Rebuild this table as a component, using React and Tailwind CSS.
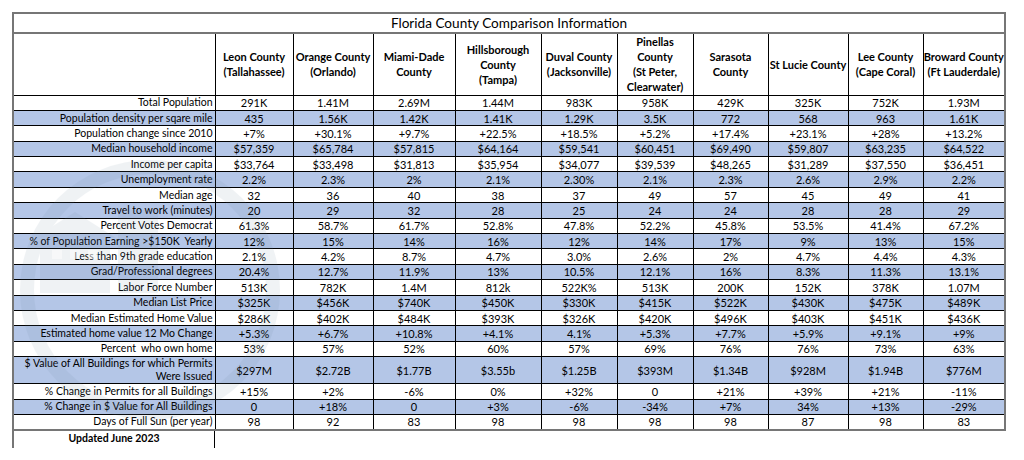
import React from "react";

const cols = [
  ["Leon County", "(Tallahassee)"],
  ["Orange County", "(Orlando)"],
  ["Miami-Dade", "County"],
  ["Hillsborough", "County", "(Tampa)"],
  ["Duval County", "(Jacksonville)"],
  ["Pinellas", "County", "(St Peter,", "Clearwater)"],
  ["Sarasota", "County"],
  ["St Lucie County"],
  ["Lee County", "(Cape Coral)"],
  ["Broward County", "(Ft Lauderdale)"],
];

const widths = [202, 78, 80, 82, 86, 76, 76, 75, 80, 75, 82];

const rows = [
  ["Total Population", ["291K", "1.41M", "2.69M", "1.44M", "983K", "958K", "429K", "325K", "752K", "1.93M"]],
  ["Population density per sqare mile", ["435", "1.56K", "1.42K", "1.41K", "1.29K", "3.5K", "772", "568", "963", "1.61K"]],
  ["Population change since 2010", ["+7%", "+30.1%", "+9.7%", "+22.5%", "+18.5%", "+5.2%", "+17.4%", "+23.1%", "+28%", "+13.2%"]],
  ["Median household income", ["$57,359", "$65,784", "$57,815", "$64,164", "$59,541", "$60,451", "$69,490", "$59,807", "$63,235", "$64,522"]],
  ["Income per capita", ["$33,764", "$33,498", "$31,813", "$35,954", "$34,077", "$39,539", "$48,265", "$31,289", "$37,550", "$36,451"]],
  ["Unemployment rate", ["2.2%", "2.3%", "2%", "2.1%", "2.30%", "2.1%", "2.3%", "2.6%", "2.9%", "2.2%"]],
  ["Median age", ["32", "36", "40", "38", "37", "49", "57", "45", "49", "41"]],
  ["Travel to work (minutes)", ["20", "29", "32", "28", "25", "24", "24", "28", "28", "29"]],
  ["Percent Votes Democrat", ["61.3%", "58.7%", "61.7%", "52.8%", "47.8%", "52.2%", "45.8%", "53.5%", "41.4%", "67.2%"]],
  ["% of Population Earning >$150K  Yearly", ["12%", "15%", "14%", "16%", "12%", "14%", "17%", "9%", "13%", "15%"]],
  ["Less than 9th grade education", ["2.1%", "4.2%", "8.7%", "4.7%", "3.0%", "2.6%", "2%", "4.7%", "4.4%", "4.3%"]],
  ["Grad/Professional degrees", ["20.4%", "12.7%", "11.9%", "13%", "10.5%", "12.1%", "16%", "8.3%", "11.3%", "13.1%"]],
  ["Labor Force Number", ["513K", "782K", "1.4M", "812k", "522K%", "513K", "200K", "152K", "378K", "1.07M"]],
  ["Median List Price", ["$325K", "$456K", "$740K", "$450K", "$330K", "$415K", "$522K", "$430K", "$475K", "$489K"]],
  ["Median Estimated Home Value", ["$286K", "$402K", "$484K", "$393K", "$326K", "$420K", "$496K", "$403K", "$451K", "$436K"]],
  ["Estimated home value 12 Mo Change", ["+5.3%", "+6.7%", "+10.8%", "+4.1%", "4.1%", "+5.3%", "+7.7%", "+5.9%", "+9.1%", "+9%"]],
  ["Percent  who own home", ["53%", "57%", "52%", "60%", "57%", "69%", "76%", "76%", "73%", "63%"]],
  [["$ Value of All Buildings for which Permits", "Were Issued"], ["$297M", "$2.72B", "$1.77B", "$3.55b", "$1.25B", "$393M", "$1.34B", "$928M", "$1.94B", "$776M"]],
  ["% Change in Permits for all Buildings", ["+15%", "+2%", "-6%", "0%", "+32%", "0", "+21%", "+39%", "+21%", "-11%"]],
  ["% Change in $ Value for All Buildings", ["0", "+18%", "0", "+3%", "-6%", "-34%", "+7%", "34%", "+13%", "-29%"]],
  ["Days of Full Sun (per year)", ["98", "92", "83", "98", "98", "98", "98", "87", "98", "83"]],
];

function Watermark() {
  return (
    <svg
      className="pointer-events-none absolute left-0 top-[150px]"
      width="300"
      height="290"
      viewBox="0 0 300 290"
    >
      <g opacity="0.1" fill="#6f8aa0">
        <path d="M150 10 A130 130 0 1 0 150 270 A130 130 0 1 0 150 10 Z M150 24 A116 116 0 1 1 150 256 A116 116 0 1 1 150 24 Z" fillRule="evenodd" />
        <rect x="40" y="85" width="70" height="58" />
        <polygon points="34,88 75,62 116,88" />
        <rect x="118" y="60" width="40" height="83" />
      </g>
      <g fill="#ffffff" opacity="0.5">
        <rect x="52" y="100" width="10" height="9" />
        <rect x="70" y="100" width="10" height="9" />
        <rect x="88" y="100" width="10" height="9" />
      </g>
    </svg>
  );
}

export default function App() {
  return (
    <div
      className="relative h-[460px] w-[1024px] overflow-hidden bg-white pl-[12px] pt-[12px] text-black"
      style={{ fontFamily: "Lato, 'Liberation Sans', sans-serif" }}
    >
      <table className="table-fixed border-collapse border-2 border-[#767676]" style={{ width: 993 }}>
        <colgroup>
          {widths.map((w, i) => (
            <col key={i} style={{ width: w }} />
          ))}
        </colgroup>
        <thead>
          <tr className="h-[20px]">
            <th
              colSpan={11}
              className="border-b-2 border-[#767676] p-0 text-center text-[13.6px] font-normal leading-[18px]"
            >
              Florida County Comparison Information
            </th>
          </tr>
          <tr className="h-[62px]">
            <th className="border border-black p-0"></th>
            {cols.map((c, i) => (
              <th
                key={i}
                className="border border-black p-0 text-center text-[11px] font-bold leading-[15px]"
              >
                {c.map((l, j) => (
                  <div key={j}>{l}</div>
                ))}
              </th>
            ))}
          </tr>
        </thead>
        <tbody>
          {rows.map(([label, vals], i) => {
            const two = Array.isArray(label);
            return (
              <tr
                key={i}
                className={`${i % 2 === 1 ? "bg-[#b4c6e7]" : "bg-white"} ${two ? "h-[27px]" : "h-[15.4px]"}`}
              >
                <td className="whitespace-pre border border-black py-0 pl-0 pr-[2px] text-right text-[10.5px] leading-[13px]">
                  {two ? (
                    <>
                      <div>{label[0]}</div>
                      <div>{label[1]}</div>
                    </>
                  ) : (
                    label
                  )}
                </td>
                {vals.map((v, j) => (
                  <td
                    key={j}
                    className="border border-black p-0 text-center text-[11px] leading-[13px]"
                  >
                    {v}
                  </td>
                ))}
              </tr>
            );
          })}
        </tbody>
      </table>
      <div className="flex h-[17px] w-[203px] items-center justify-center border-l-2 border-r border-l-[#767676] border-r-black text-[10.5px] font-bold">
        Updated June 2023
      </div>
      <Watermark />
    </div>
  );
}
